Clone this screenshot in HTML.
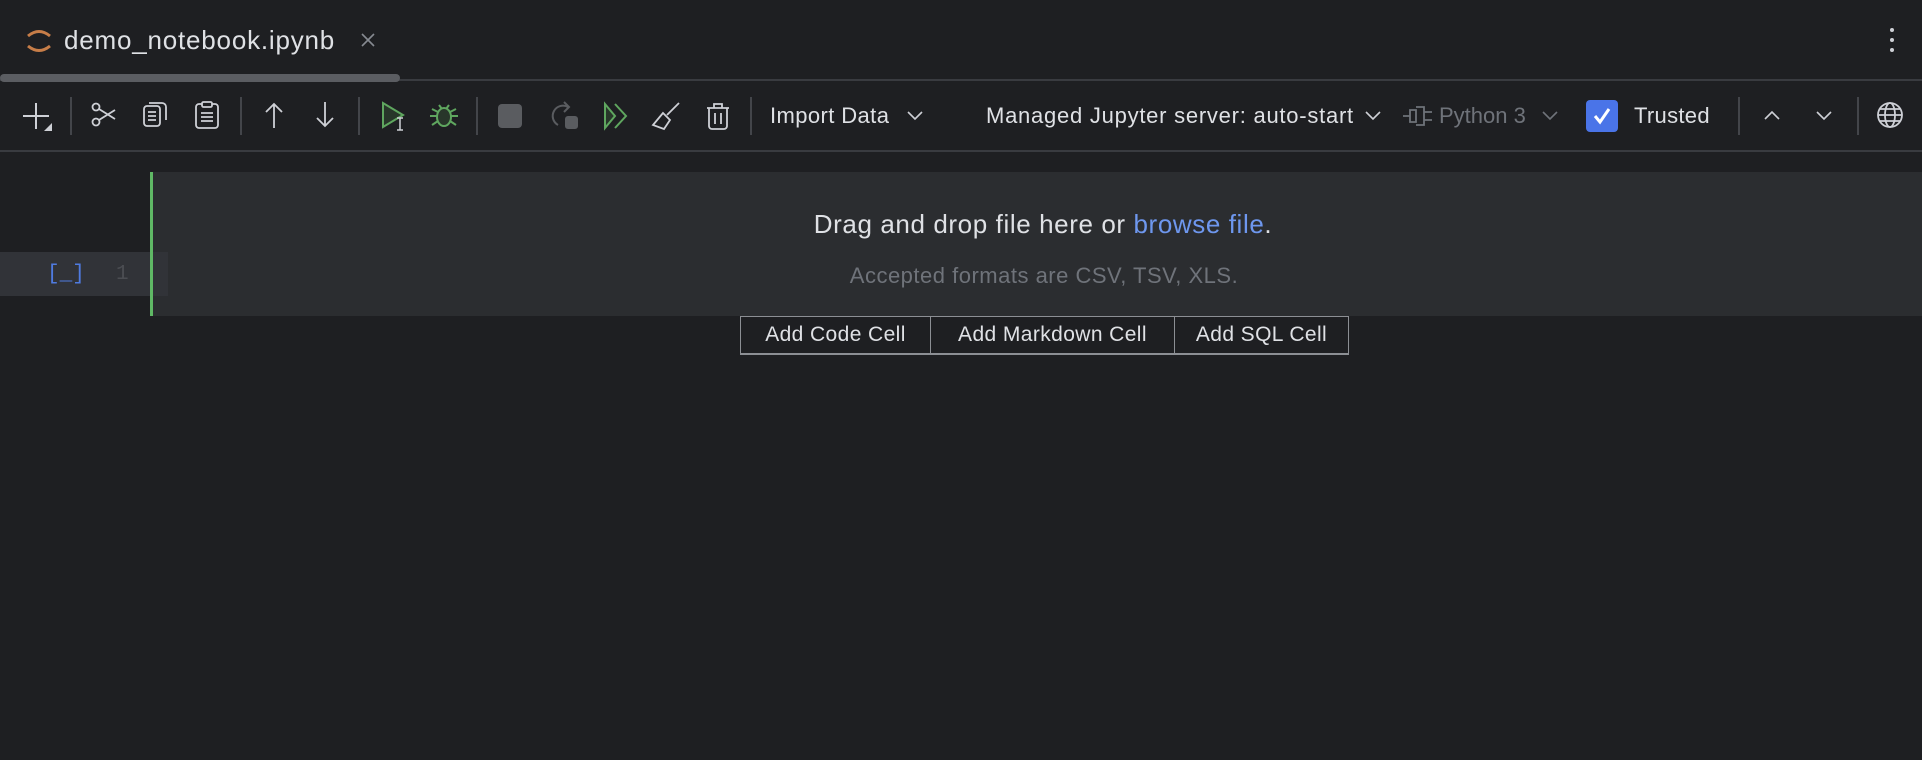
<!DOCTYPE html>
<html><head><meta charset="utf-8"><style>
*{margin:0;padding:0;box-sizing:border-box}
body{width:1922px;height:760px;background:#1e1f22;position:relative;overflow:hidden;font-family:"Liberation Sans",sans-serif;color:#dfe1e5}
.a{position:absolute}
.t{position:absolute;white-space:nowrap;line-height:1}
.sep{position:absolute;top:97px;width:2px;height:38px;background:#43454a}
svg{position:absolute;overflow:visible}
</style></head><body>
<svg style="left:26px;top:28px" width="26" height="26" viewBox="0 0 26 26"><path d="M2 8 Q13 -1 24 8" stroke="#c77d48" stroke-width="3" fill="none"/><path d="M2 18 Q13 27 24 18" stroke="#c77d48" stroke-width="3" fill="none"/></svg>
<div class="t" style="left:64px;top:27px;font-size:26px;letter-spacing:0.8px;color:#dfe1e5">demo_notebook.ipynb</div>
<svg style="left:361px;top:33px" width="14" height="14"><path d="M1 1L13 13M13 1L1 13" stroke="#868a91" stroke-width="1.6"/></svg>
<svg style="left:1886px;top:26px" width="12" height="28"><circle cx="6" cy="4" r="2" fill="#ced0d6"/><circle cx="6" cy="14" r="2" fill="#ced0d6"/><circle cx="6" cy="24" r="2" fill="#ced0d6"/></svg>
<div class="a" style="left:0;top:79px;width:1922px;height:2px;background:#393b40"></div>
<div class="a" style="left:0;top:74px;width:400px;height:8px;border-radius:4px;background:#5b5d62"></div>
<svg style="left:23px;top:103px" width="30" height="28" viewBox="0 0 30 28" fill="none" stroke="#ced0d6" stroke-width="2"><path d="M13 0V26M0 13H26"/><path d="M29 20V28H21Z" fill="#ced0d6" stroke="none"/></svg>
<div class="sep" style="left:70px"></div>
<svg style="left:91px;top:102px" width="26" height="26" viewBox="0 0 26 26" fill="none" stroke="#ced0d6" stroke-width="1.8"><circle cx="5" cy="5" r="3.5"/><circle cx="5" cy="20" r="3.5"/><path d="M8 7L24 17M8 18L24 8"/></svg>
<svg style="left:143px;top:101px" width="26" height="28" viewBox="0 0 26 28" fill="none" stroke="#ced0d6" stroke-width="1.8"><rect x="1" y="5" width="16" height="20" rx="3"/><path d="M6 2H19a4 4 0 0 1 4 4V19"/><path d="M5 11H13M5 15H13M5 19H13"/></svg>
<svg style="left:195px;top:101px" width="24" height="28" viewBox="0 0 24 28" fill="none" stroke="#ced0d6" stroke-width="1.8"><rect x="1" y="3" width="22" height="24" rx="3"/><rect x="7" y="1" width="10" height="5" rx="1.5" fill="#1e1f22"/><path d="M6 12H18M6 16H18M6 20H18"/></svg>
<div class="sep" style="left:240px"></div>
<svg style="left:264px;top:102px" width="20" height="26" viewBox="0 0 20 26" fill="none" stroke="#ced0d6" stroke-width="1.8"><path d="M10 2V26M2 10L10 2L18 10"/></svg>
<svg style="left:315px;top:102px" width="20" height="26" viewBox="0 0 20 26" fill="none" stroke="#ced0d6" stroke-width="1.8"><path d="M10 0V24M2 16L10 24L18 16"/></svg>
<div class="sep" style="left:358px"></div>
<svg style="left:381px;top:102px" width="28" height="30" viewBox="0 0 28 30" fill="none" stroke="#5fa65f" stroke-width="2"><path d="M2 1V25L22 13Z" fill="#28362a"/><path d="M19 16V28M16 16H22M16 28H22" stroke="#ced0d6" stroke-width="1.5"/></svg>
<svg style="left:429px;top:101px" width="30" height="28" viewBox="0 0 30 28" fill="none" stroke="#5fa65f" stroke-width="2"><ellipse cx="15" cy="16" rx="7" ry="9" fill="#28362a"/><path d="M10 4L13 8M20 4L17 8M1 15H8M22 15H29M3 8L9 11M27 8L21 11M3 24L9 20M27 24L21 20"/></svg>
<div class="sep" style="left:476px"></div>
<div class="a" style="left:498px;top:104px;width:24px;height:24px;border-radius:4px;background:#5a5c60"></div>
<svg style="left:550px;top:101px" width="30" height="30" viewBox="0 0 30 30" fill="none" stroke="#5a5c60" stroke-width="2"><path d="M18 6A10 10 0 1 0 8 24"/><path d="M14 1L19 6L14 11" /><rect x="15" y="15" width="13" height="13" rx="3" fill="#5a5c60" stroke="none"/></svg>
<svg style="left:603px;top:103px" width="24" height="26" viewBox="0 0 24 26" fill="none" stroke="#5fa65f" stroke-width="2"><path d="M2 1V25L12 13Z" fill="#28362a"/><path d="M12 1L23 13L12 25"/></svg>
<svg style="left:651px;top:101px" width="30" height="30" viewBox="0 0 30 30" fill="none" stroke="#ced0d6" stroke-width="1.8"><path d="M28 2L16 14"/><path d="M12 12L19 19L13 28L2 24Z"/></svg>
<svg style="left:706px;top:102px" width="24" height="28" viewBox="0 0 24 28" fill="none" stroke="#ced0d6" stroke-width="1.8"><path d="M1 6H23M8 6V2H16V6M3 6V24a3 3 0 0 0 3 3H18a3 3 0 0 0 3-3V6M9 11V22M15 11V22"/></svg>
<div class="sep" style="left:750px"></div>
<div class="t" style="left:770px;top:105px;font-size:22px;letter-spacing:0.4px">Import Data</div>
<svg style="left:907px;top:111px" width="16" height="10"><path d="M1 1L8 8L15 1" stroke="#ced0d6" stroke-width="1.6" fill="none"/></svg>
<div class="t" style="left:986px;top:105px;font-size:22px;letter-spacing:0.75px">Managed Jupyter server: auto-start</div>
<svg style="left:1365px;top:111px" width="16" height="10"><path d="M1 1L8 8L15 1" stroke="#ced0d6" stroke-width="1.6" fill="none"/></svg>
<svg style="left:1402px;top:104px" width="34" height="24" viewBox="0 0 34 24" fill="none" stroke="#6f737a" stroke-width="1.8"><path d="M1 12H8M8 6H14V18H8ZM14 3H22V21H14M22 8H30M22 16H30"/></svg>
<div class="t" style="left:1439px;top:105px;font-size:22px;color:#6f737a">Python 3</div>
<svg style="left:1542px;top:111px" width="16" height="10"><path d="M1 1L8 8L15 1" stroke="#6f737a" stroke-width="1.6" fill="none"/></svg>
<div class="a" style="left:1586px;top:100px;width:32px;height:32px;border-radius:4px;background:#4a74e8"></div>
<svg style="left:1592px;top:106px" width="20" height="20"><path d="M3 10L8 16L17 3" stroke="#fff" stroke-width="3" fill="none"/></svg>
<div class="t" style="left:1634px;top:105px;font-size:22px;letter-spacing:0.3px">Trusted</div>
<div class="sep" style="left:1738px"></div>
<svg style="left:1764px;top:110px" width="16" height="10"><path d="M1 9L8 2L15 9" stroke="#ced0d6" stroke-width="1.6" fill="none"/></svg>
<svg style="left:1816px;top:111px" width="16" height="10"><path d="M1 1L8 8L15 1" stroke="#ced0d6" stroke-width="1.6" fill="none"/></svg>
<div class="sep" style="left:1857px"></div>
<svg style="left:1876px;top:101px" width="28" height="28" viewBox="0 0 28 28" fill="none" stroke="#ced0d6" stroke-width="1.8"><circle cx="14" cy="14" r="12"/><ellipse cx="14" cy="14" rx="5" ry="12"/><path d="M2 14H26M4 8H24M4 20H24"/></svg>
<div class="a" style="left:0;top:150px;width:1922px;height:2px;background:#393b40"></div>
<div class="a" style="left:150px;top:172px;width:1772px;height:144px;background:#2b2d30"></div>
<div class="a" style="left:0;top:252px;width:168px;height:44px;background:#313338"></div>
<div class="a" style="left:150px;top:172px;width:3px;height:144px;background:#5fb865"></div>
<div class="t" style="left:47px;top:264px;font-family:'Liberation Mono',monospace;font-size:21px;color:#4f7be0">[_]</div>
<div class="t" style="left:116px;top:264px;font-family:'Liberation Mono',monospace;font-size:21px;color:#4b4d52">1</div>
<div class="t" style="left:543px;width:1000px;text-align:center;top:211px;font-size:26px;letter-spacing:0.6px;color:#dfe1e5">Drag and drop file here or <span style="color:#6e97ee">browse file</span>.</div>
<div class="t" style="left:544px;width:1000px;text-align:center;top:265px;font-size:22px;letter-spacing:0.5px;color:#6f737a">Accepted formats are CSV, TSV, XLS.</div>
<div class="a" style="left:740px;top:316px;width:609px;height:39px;border:1px solid #8c8f94;border-bottom-width:2px;display:flex;font-size:21px;letter-spacing:0.4px">
<div style="width:190px;border-right:1px solid #8c8f94;text-align:center;line-height:36px">Add Code Cell</div>
<div style="width:244px;border-right:1px solid #8c8f94;text-align:center;line-height:36px">Add Markdown Cell</div>
<div style="flex:1;text-align:center;line-height:36px">Add SQL Cell</div>
</div>
</body></html>
